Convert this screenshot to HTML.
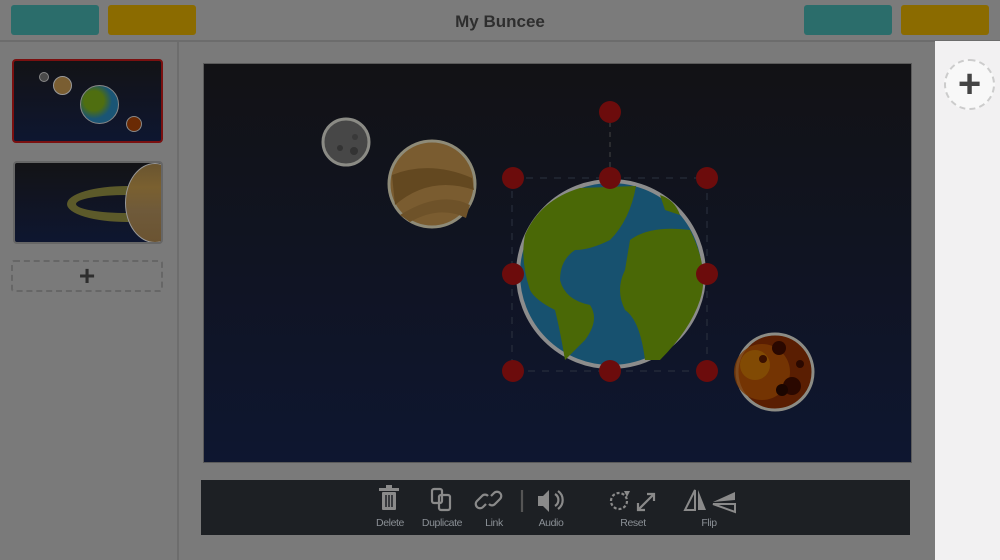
<!DOCTYPE html>
<html><head><style>
*{margin:0;padding:0;box-sizing:border-box}
body{width:1000px;height:560px;background:#7a7a7a;position:relative;overflow:hidden;font-family:"Liberation Sans",sans-serif}
.abs{position:absolute}
.btn{position:absolute;top:5px;height:30px;border-radius:3px}
.tl{color:#8a8f95;font-size:10.5px;position:absolute;top:37px;text-align:center;width:60px;letter-spacing:-.4px}
</style></head><body>
<div class="abs" style="left:0;top:0;width:1000px;height:42px;background:#7b7b7b;border-bottom:2px solid #6c6c6c"></div>
<div class="btn" style="left:11px;width:88px;background:#2b6d6b"></div>
<div class="btn" style="left:108px;width:88px;background:#8b6b00"></div>
<div class="btn" style="left:804px;width:88px;background:#2b6d6b"></div>
<div class="btn" style="left:901px;width:88px;background:#8b6b00"></div>
<div class="abs" style="left:0;width:1000px;top:12px;text-align:center;font-size:17px;font-weight:bold;color:#2e2e2e">My Buncee</div>
<div class="abs" style="left:177px;top:42px;width:2px;height:518px;background:#6d6d6d"></div>
<div class="abs" style="left:12px;top:59px;width:151px;height:84px;border:2px solid #7a1010;border-radius:4px;background:linear-gradient(#131316,#0e1630);overflow:hidden">
<div class="abs" style="left:25px;top:11px;width:10px;height:10px;border-radius:50%;background:#4a4a4a;border:1px solid #888"></div>
<div class="abs" style="left:39px;top:15px;width:19px;height:19px;border-radius:50%;background:#7a5e32;border:1px solid #999"></div>
<div class="abs" style="left:66px;top:24px;width:39px;height:39px;border-radius:50%;background:radial-gradient(circle at 35% 40%,#4f6e10 30%,#1a5575 55%);border:1px solid #888"></div>
<div class="abs" style="left:112px;top:55px;width:16px;height:16px;border-radius:50%;background:#6a2a04;border:1px solid #888"></div>
</div>
<div class="abs" style="left:13px;top:161px;width:150px;height:83px;border:2px solid #666;border-radius:4px;background:linear-gradient(#131316,#0e1630);overflow:hidden">
<div class="abs" style="left:52px;top:23px;width:120px;height:36px;border-radius:50%;border:9px solid #5c5a2a"></div>
<div class="abs" style="left:110px;top:0px;width:60px;height:80px;border-radius:50%;background:linear-gradient(#6a5530,#7a6030 30%,#6f5a3a 60%,#6b5432);border:1px solid #999"></div>
</div>
<div class="abs" style="left:11px;top:260px;width:152px;height:32px;border:2px dashed #666;border-radius:3px;text-align:center;font-size:28px;line-height:28px;color:#2e2e2e;font-weight:bold">+</div>
<div class="abs" style="left:203px;top:63px;width:709px;height:400px;background:linear-gradient(#121215,#0e1630);border:1px solid #5a5a5a"></div>
<svg class="abs" style="left:0;top:0" width="1000" height="560">
<circle cx="346" cy="142" r="23" fill="#474747" stroke="#8b8b85" stroke-width="3"/>
<circle cx="340" cy="148" r="3" fill="#333"/><circle cx="354" cy="151" r="4" fill="#333"/><circle cx="355" cy="137" r="3" fill="#393939"/>
<circle cx="432" cy="184" r="43" fill="#7a5c30" stroke="#8e8b78" stroke-width="3"/>
<path d="M392 175 Q430 160 472 178 L474 190 Q430 175 395 205Z" fill="#634820"/>
<path d="M400 215 Q440 190 470 205 L466 218 Q440 205 410 222Z" fill="#6e5229"/>
<line x1="610" y1="112" x2="610" y2="178" stroke="#444" stroke-dasharray="5 5"/>
<rect x="512" y="178" width="195" height="193" fill="none" stroke="#2c3340" stroke-dasharray="7 7"/>
<circle cx="611" cy="274" r="93" fill="#17516f" stroke="#8c8c8c" stroke-width="4"/>
<path d="M525 235 Q540 200 580 188 L636 186 Q630 220 610 240 Q590 250 575 250 Q560 260 560 280 Q565 300 590 305 Q600 320 585 340 L565 360 Q560 330 555 310 Q535 300 530 290 Q520 260 525 235Z" fill="#4a6806"/>
<path d="M630 240 Q650 225 690 230 Q710 270 700 300 Q690 330 660 360 L645 360 Q640 320 625 310 Q615 290 625 270Z" fill="#4a6806"/>
<path d="M660 195 Q675 200 680 215 L665 210Z" fill="#4a6806"/>
<circle cx="775" cy="372" r="38" fill="#5a1e02" stroke="#8c8c85" stroke-width="3"/>
<circle cx="762" cy="372" r="28" fill="#7a3a04" opacity=".8"/>
<circle cx="755" cy="365" r="15" fill="#8a5a05" opacity=".6"/>
<circle cx="779" cy="348" r="7" fill="#2a0800"/><circle cx="792" cy="386" r="9" fill="#2a0800"/><circle cx="800" cy="364" r="4" fill="#2a0800"/><circle cx="763" cy="359" r="4" fill="#3a1000"/><circle cx="782" cy="390" r="6" fill="#1a0500"/>
<g fill="#6c0c0c">
<circle cx="610" cy="112" r="11"/><circle cx="513" cy="178" r="11"/><circle cx="610" cy="178" r="11"/><circle cx="707" cy="178" r="11"/>
<circle cx="513" cy="274" r="11"/><circle cx="707" cy="274" r="11"/><circle cx="513" cy="371" r="11"/><circle cx="610" cy="371" r="11"/><circle cx="707" cy="371" r="11"/></g>
</svg>
<div class="abs" style="left:201px;top:480px;width:709px;height:55px;background:#1d2024">
<svg class="abs" style="left:0;top:0" width="709" height="40" fill="#8a8a8a" stroke="#8a8a8a">
<rect x="181" y="12" width="14" height="18" rx="1" stroke="none"/><rect x="178" y="8" width="20" height="3" stroke="none"/><rect x="185" y="5" width="6" height="3" stroke="none"/>
<g stroke="#1d2024" stroke-width="1.5"><line x1="185" y1="15" x2="185" y2="27"/><line x1="188" y1="15" x2="188" y2="27"/><line x1="191" y1="15" x2="191" y2="27"/></g>
<g fill="none" stroke-width="2.2"><rect x="231" y="9" width="10" height="14" rx="2"/><rect x="238" y="15" width="11" height="15" rx="2"/>
<path d="M285 24 l-3 3 a4 4 0 0 1 -6 -6 l5 -5 a4 4 0 0 1 6 0 M290 16 l3 -3 a4 4 0 0 1 6 6 l-5 5 a4 4 0 0 1 -6 0"/>
<line x1="321" y1="10" x2="321" y2="32" stroke="#555"/>
<path d="M354 14 a7 7 0 0 1 0 12 M357 11 a11 11 0 0 1 0 18"/>
<circle cx="418" cy="21" r="8" stroke-dasharray="3 2"/>
<path d="M437 30 l16 -16 M446 14 h7 v7 M437 23 v7 h7"/></g>
<path d="M337 16 h5 l6 -6 v22 l-6 -6 h-5z" stroke="none"/>
<path d="M423 11 l6 0 l-3 6z" stroke="none"/>
<path d="M494 30 l0 -20 l-10 20z" fill="none" stroke-width="2"/><path d="M497 30 l0 -20 l8 20z" stroke="none"/>
<path d="M512 22 l22 -10 v8z" stroke="none"/><path d="M512 24 l22 8 v-8z" fill="none" stroke-width="2"/>
</svg>
<div class="tl" style="left:159px">Delete</div>
<div class="tl" style="left:211px">Duplicate</div>
<div class="tl" style="left:263px">Link</div>
<div class="tl" style="left:320px">Audio</div>
<div class="tl" style="left:402px">Reset</div>
<div class="tl" style="left:478px">Flip</div>
</div>
<div class="abs" style="left:935px;top:41px;width:65px;height:519px;background:#f2f1f2"></div>
<div class="abs" style="left:944px;top:59px;width:51px;height:51px;border-radius:50%;border:2px dashed #ccc;background:#f8f8f8;text-align:center;line-height:46px;font-size:40px;font-weight:bold;color:#444">+</div>
</body></html>
